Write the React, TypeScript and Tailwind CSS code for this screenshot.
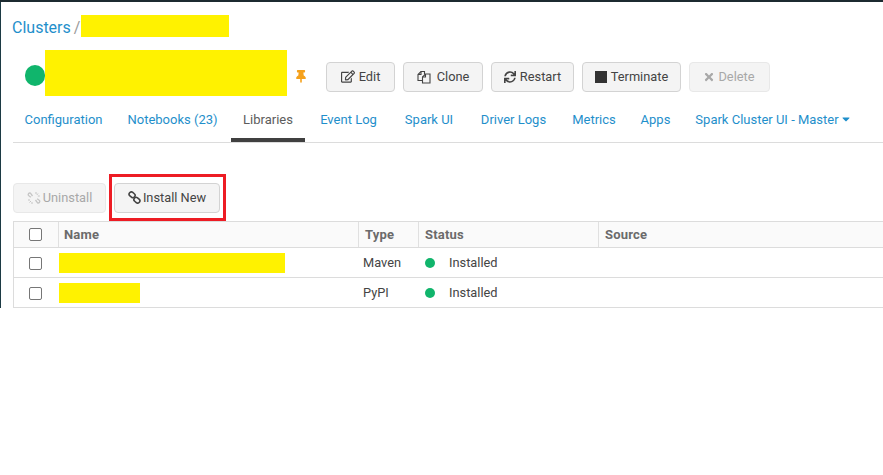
import React from "react";
import { FaRegEdit, FaSync, FaTimes, FaThumbtack, FaCaretDown } from "react-icons/fa";

const font = "font-['Roboto','Liberation_Sans',sans-serif]";

function CopyIcon() {
  return (
    <svg viewBox="0 0 14 14" className="w-[14px] h-[14px] mr-[6px]" fill="none" stroke="currentColor" strokeWidth="1.1">
      <path d="M5.5 10.5H1V4.5L4 1.5H7.5V4.5" />
      <path d="M4 1.5V4.5H1" />
      <path d="M5.5 13V7L8.5 4H13V13Z" />
      <path d="M8.5 4V7H5.5" />
    </svg>
  );
}

function LinkIcon() {
  return (
    <svg viewBox="0 0 13 13" className="w-[13px] h-[13px] mr-[2px]" fill="none" stroke="currentColor" strokeWidth="1.6">
      <rect x="0.9" y="1.6" width="6.4" height="4.4" rx="2.2" transform="rotate(40 4.1 3.8)" />
      <rect x="5.7" y="7" width="6.4" height="4.4" rx="2.2" transform="rotate(40 8.9 9.2)" />
    </svg>
  );
}

function UnlinkIcon() {
  return (
    <svg viewBox="0 0 14 14" className="w-[14px] h-[14px] mr-[2px]" fill="none" stroke="currentColor" strokeWidth="1.3">
      <path d="M5.5 5 3.5 2.2A1.6 1.6 0 0 0 1.4 4.4L3.8 6.3" />
      <path d="M8.5 9 10.5 11.8A1.6 1.6 0 0 0 12.6 9.6L10.2 7.7" />
      <path d="M9 1v2M11 2.5 9.8 4M12.8 5h-2M1 9h2M2.5 11.5 4 10M5 13v-2" strokeWidth="1" />
    </svg>
  );
}

function Btn({ children, disabled, w }: { children: React.ReactNode; disabled?: boolean; w: string }) {
  return (
    <div
      className={`h-[30px] ${w} pb-[1px] flex items-center justify-center rounded-[4px] border text-[12.8px] bg-[#f4f4f4] ${
        disabled ? "border-[#e8e8e8] text-[#a8a8a8]" : "border-[#d3d3d3] text-[#444]"
      }`}
    >
      {children}
    </div>
  );
}

function Tab({ children, active, w }: { children: React.ReactNode; active?: boolean; w: string }) {
  return (
    <div
      className={`h-[39px] ${w} shrink-0 pt-[5px] text-center text-[13px] leading-[24px] whitespace-nowrap border-b-4 ${
        active ? "text-[#5c5c5c] border-[#404040]" : "text-[#1f8fcb] border-transparent"
      }`}
    >
      {children}
    </div>
  );
}

function Check() {
  return <div className="w-[13px] h-[13px] rounded-[2px] border border-[#767676] bg-white" />;
}

function Row({ yellow, type }: { yellow: string; type: string }) {
  return (
    <div className="h-[30px] flex items-center border-b border-[#dcdcdc] text-[12.8px] text-[#444]">
      <div className="w-[45px] pl-[15px] pt-[2px]"><Check /></div>
      <div className="w-[304px] pt-[1px]"><div className={`h-[20px] bg-[#fff200] ${yellow}`} /></div>
      <div className="w-[62px]">{type}</div>
      <div className="flex items-center">
        <div className="w-[10px] h-[10px] rounded-full bg-[#10b56c]" />
        <span className="ml-[14px]">Installed</span>
      </div>
    </div>
  );
}

export default function App() {
  return (
    <div className={`w-[883px] h-[475px] bg-white overflow-hidden relative ${font}`}>
      <div className="h-[2px] bg-[#1c2a30]" />
      <div className="h-[306px] border-l border-[#1c3a44] pl-[12px]">
        <div className="h-[48px] pt-[13px] -ml-[1px] flex items-start">
          <span className="text-[16px] leading-[26px] text-[#1f8fcb]">Clusters</span>
          <span className="text-[16px] leading-[26px] text-[#9a9a9a] ml-[3px]">/</span>
          <div className="ml-[1px] w-[148px] h-[22px] bg-[#fff200]" />
        </div>

        <div className="h-[46px] flex items-center pl-[12px]">
          <div className="w-[20px] h-[21px] rounded-full bg-[#10b56c] mt-[5px]" />
          <div className="w-[242px] h-[46px] bg-[#fff200]" />
          <FaThumbtack className="ml-[9px] w-[10px] h-[13px] text-[#f5a11c] mt-[6px]" />
          <div className="flex gap-[8px] ml-[20px] mt-[8px]">
            <Btn w="w-[69px]"><FaRegEdit className="w-[14px] h-[13px] mr-[4px]" />Edit</Btn>
            <Btn w="w-[80px]"><CopyIcon />Clone</Btn>
            <Btn w="w-[83px]"><FaSync className="w-[12px] h-[12px] mr-[4px]" />Restart</Btn>
            <Btn w="w-[99px]"><span className="w-[12px] h-[12px] mr-[4px] bg-[#333]" />Terminate</Btn>
            <Btn w="w-[81px]" disabled><FaTimes className="w-[10px] h-[12px] mr-[4px]" />Delete</Btn>
          </div>
        </div>

        <div className="h-[47px] flex items-end gap-[2px] border-b border-[#dcdcdc]">
          <Tab w="w-[101px]">Configuration</Tab>
          <Tab w="w-[113px]">Notebooks (23)</Tab>
          <Tab w="w-[74px]" active>Libraries</Tab>
          <Tab w="w-[83px]">Event Log</Tab>
          <Tab w="w-[74px]">Spark UI</Tab>
          <Tab w="w-[91px]">Driver Logs</Tab>
          <Tab w="w-[66px]">Metrics</Tab>
          <Tab w="w-[53px]">Apps</Tab>
          <Tab w="w-[178px]">
            Spark Cluster UI - Master
            <FaCaretDown className="inline w-[10px] h-[12px] ml-[2px] align-[-1px]" />
          </Tab>
        </div>

        <div className="flex gap-[8px] mt-[40px] h-[30px]">
          <Btn w="w-[93px]" disabled><span className="text-[#c4c4c4]"><UnlinkIcon /></span>Uninstall</Btn>
          <Btn w="w-[106px]"><LinkIcon />Install New</Btn>
        </div>

        <div className="mt-[8px] w-[870px] border-l border-t border-[#dcdcdc]">
          <div className="h-[26px] flex items-center border-b border-[#dcdcdc] bg-[#fafafa] text-[13px] font-bold text-[#6b6b6b] tracking-[0.2px]">
            <div className="w-[44px] pl-[15px]"><Check /></div>
            <div className="w-[300px] h-[25px] border-l border-[#e0e0e0] pl-[5px] leading-[25px]">Name</div>
            <div className="w-[60px] h-[25px] border-l border-[#e0e0e0] pl-[6px] leading-[25px]">Type</div>
            <div className="w-[180px] h-[25px] border-l border-[#e0e0e0] pl-[6px] leading-[25px]">Status</div>
            <div className="flex-1 h-[25px] border-l border-[#e0e0e0] pl-[6px] leading-[25px]">Source</div>
          </div>
          <Row yellow="w-[226px]" type="Maven" />
          <Row yellow="w-[81px]" type="PyPI" />
        </div>
      </div>

      <div className="absolute left-[109px] top-[174px] w-[117px] h-[47px] border-[3px] border-[#ed1c24]" />
    </div>
  );
}
